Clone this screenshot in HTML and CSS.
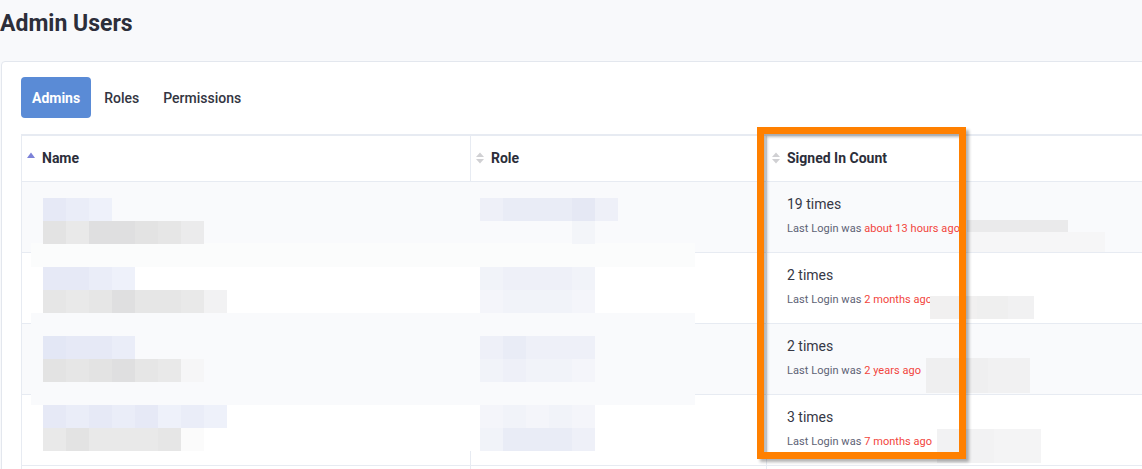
FILE: index.html
```html
<!DOCTYPE html>
<html lang="en">
<head>
<meta charset="utf-8">
<title>Admin Users</title>
<link rel="stylesheet" href="styles.css">
</head>
<body>
<h1 class="page-title">Admin Users</h1>
<section class="card">
  <nav class="tabs">
    <span class="tab active">Admins</span>
    <span class="tab">Roles</span>
    <span class="tab">Permissions</span>
  </nav>
  <div class="table">
    <div class="thead">
      <div class="th">
        <svg class="sort" width="8" height="12" viewBox="0 0 8 12"><path d="M0 6 L4 0.5 L8 6 Z" fill="#7c82d8"/></svg>
        <span>Name</span>
      </div>
      <div class="th col-sep">
        <svg class="sort" width="8" height="12" viewBox="0 0 8 12"><path d="M0 5 L4 0.5 L8 5 Z" fill="#d0d0d3"/><path d="M0 7 L8 7 L4 11.5 Z" fill="#d0d0d3"/></svg>
        <span>Role</span>
      </div>
      <div class="th col-sep">
        <svg class="sort" width="8" height="12" viewBox="0 0 8 12"><path d="M0 5 L4 0.5 L8 5 Z" fill="#d0d0d3"/><path d="M0 7 L8 7 L4 11.5 Z" fill="#d0d0d3"/></svg>
        <span>Signed In Count</span>
      </div>
    </div>
    <div class="tbody">
      <div class="row striped">
        <div class="td"></div>
        <div class="td col-sep"></div>
        <div class="td col-sep count">
          <div class="times">19 times</div>
          <div class="login">Last Login was <span class="ago">about 13 hours ago</span></div>
        </div>
      </div>
      <div class="row">
        <div class="td"></div>
        <div class="td col-sep"></div>
        <div class="td col-sep count">
          <div class="times">2 times</div>
          <div class="login">Last Login was <span class="ago">2 months ago</span></div>
        </div>
      </div>
      <div class="row striped">
        <div class="td"></div>
        <div class="td col-sep"></div>
        <div class="td col-sep count">
          <div class="times">2 times</div>
          <div class="login">Last Login was <span class="ago">2 years ago</span></div>
        </div>
      </div>
      <div class="row">
        <div class="td"></div>
        <div class="td col-sep"></div>
        <div class="td col-sep count">
          <div class="times">3 times</div>
          <div class="login">Last Login was <span class="ago">7 months ago</span></div>
        </div>
      </div>
      <div class="row">
        <div class="td"></div>
        <div class="td col-sep"></div>
        <div class="td col-sep count"></div>
      </div>

      <div class="redact-layer" aria-hidden="true">
        <div class="band band-a"></div>
        <div class="band band-b"></div>
        <div class="band band-c"></div>
        <div class="band band-d"></div>
        <div class="band band-e"></div>

        <div class="pix col-name p1">
          <div class="pr"><i class="b1"></i><i class="b2"></i><i class="b3"></i></div>
          <div class="pr"><i class="g1"></i><i class="g3"></i><i class="g0"></i><i class="g0"></i><i class="g1"></i><i class="g2"></i><i class="g4"></i></div>
        </div>
        <div class="pix col-name p2">
          <div class="pr"><i class="b1"></i><i class="b1"></i><i class="b2"></i><i class="b3"></i></div>
          <div class="pr"><i class="g2"></i><i class="g3"></i><i class="g2"></i><i class="g0"></i><i class="g2"></i><i class="g2"></i><i class="g3"></i><i class="g5"></i></div>
        </div>
        <div class="pix col-name p3">
          <div class="pr"><i class="b0"></i><i class="b1"></i><i class="b1"></i><i class="b2"></i></div>
          <div class="pr"><i class="g1"></i><i class="g2"></i><i class="g1"></i><i class="g0"></i><i class="g2"></i><i class="g3"></i><i class="g6"></i></div>
        </div>
        <div class="pix col-name p4">
          <div class="pr"><i class="b1"></i><i class="b2"></i><i class="b1"></i><i class="b2"></i><i class="b1"></i><i class="b3"></i><i class="b2"></i><i class="b3"></i></div>
          <div class="pr"><i class="g3"></i><i class="g1"></i><i class="g3"></i><i class="g3"></i><i class="g3"></i><i class="g2"></i><i class="g7"></i></div>
        </div>

        <div class="pix col-role p1">
          <div class="pr"><i class="l2"></i><i class="l1"></i><i class="l1"></i><i class="l1"></i><i class="l0"></i><i class="l2"></i></div>
          <div class="pr"><i class="l9"></i><i class="l9"></i><i class="l9"></i><i class="l9"></i><i class="l5"></i></div>
        </div>
        <div class="pix col-role p2">
          <div class="pr"><i class="l3"></i><i class="l2"></i><i class="l2"></i><i class="l2"></i><i class="l3"></i></div>
          <div class="pr"><i class="l4"></i><i class="l3"></i><i class="l3"></i><i class="l3"></i><i class="l4"></i></div>
        </div>
        <div class="pix col-role p3">
          <div class="pr"><i class="l2"></i><i class="l1"></i><i class="l2"></i><i class="l2"></i><i class="l2"></i></div>
          <div class="pr"><i class="l3"></i><i class="l2"></i><i class="l3"></i><i class="l3"></i><i class="l4"></i></div>
        </div>
        <div class="pix col-role p4">
          <div class="pr"><i class="l4"></i><i class="l3"></i><i class="l4"></i><i class="l3"></i><i class="l4"></i></div>
          <div class="pr"><i class="l3"></i><i class="l1"></i><i class="l1"></i><i class="l1"></i><i class="l2"></i></div>
        </div>

        <div class="date d1">
          <div class="dtop"></div>
          <div class="dbot"></div>
        </div>
        <div class="date d2"></div>
        <div class="date d3"></div>
        <div class="date d4"></div>
      </div>
    </div>
  </div>
</section>
<div class="highlight" aria-hidden="true"></div>
</body>
</html>
```

FILE: styles.css
```css
html, body {
  margin: 0;
  padding: 0;
  overflow: hidden;
}

body {
  background: #f8f9fb;
  font-family: Roboto, "Liberation Sans", Arial, sans-serif;
  color: #2f313d;
  position: relative;
  width: 1142px;
  height: 469px;
}

.page-title {
  margin: 0;
  padding: 10px 0 0 0;
  height: 51px;
  box-sizing: border-box;
  font-size: 23px;
  line-height: 27px;
  font-weight: 700;
  color: #2c2e3a;
}

.card {
  margin-left: 1px;
  width: 1300px;
  background: #ffffff;
  border: 1px solid #e3e7ee;
  border-radius: 4px;
  padding: 15px 19px 0 19px;
  margin-top: 10px;
}

.tabs {
  display: flex;
  gap: 2px;
}

.tab {
  display: flex;
  align-items: center;
  height: 41px;
  padding: 0 11px;
  font-size: 14px;
  line-height: 16px;
  font-weight: 500;
  color: #333542;
  border-radius: 4px;
}

.tab.active {
  background: #5a8bd6;
  color: #ffffff;
  font-weight: 700;
}

.table {
  margin-top: 16px;
  border-top: 2px solid #e7ebf2;
  border-left: 1px solid #e7ebf2;
}

.thead,
.row {
  display: grid;
  grid-template-columns: 448px 296px 1fr;
}

.thead {
  height: 46px;
  border-bottom: 1px solid #e7ebf2;
  box-sizing: border-box;
  background: #ffffff;
}

.th {
  display: flex;
  align-items: center;
  gap: 7px;
  padding-left: 5px;
  padding-bottom: 1px;
  font-size: 14px;
  line-height: 16px;
  font-weight: 700;
  color: #2c2e3a;
}

.sort {
  display: block;
  flex: none;
}

.col-sep {
  border-left: 1px solid #e7ebf2;
}

.tbody {
  position: relative;
}

.row {
  height: 71px;
  box-sizing: border-box;
  border-bottom: 1px solid #e7ebf2;
  background: #ffffff;
}

.row.striped {
  background: #f9fafc;
}

.count {
  padding: 14px 0 0 20px;
  display: flex;
  flex-direction: column;
}

.times {
  font-size: 14px;
  line-height: 16px;
  color: #363846;
}

.login {
  margin-top: 10px;
  font-size: 11px;
  line-height: 14px;
  color: #5d6275;
  white-space: nowrap;
  letter-spacing: 0.05px;
}

.ago {
  color: #f2453d;
}

/* redaction (pixelated blur) overlay */
.redact-layer {
  position: absolute;
  left: 0;
  top: 0;
  width: 100%;
  height: 100%;
  pointer-events: none;
}

.band {
  position: absolute;
  left: 9px;
  width: 664px;
}
.band-a { top: 0; height: 61px; background: #f9fafc; }
.band-b { top: 61px; height: 24px; background: #fbfcfc; }
.band-c { top: 85px; height: 46px; background: #ffffff; }
.band-d { top: 131px; height: 92px; background: #f9fafc; }
.band-e { top: 223px; height: 46px; background: #ffffff; }

.pix {
  position: absolute;
  display: flex;
  flex-direction: column;
}
.pix.col-name { left: 21px; }
.pix.col-role { left: 458px; }
.pix.p1 { top: 16px; }
.pix.p2 { top: 85px; }
.pix.p3 { top: 154px; }
.pix.p4 { top: 223px; }

.pr {
  display: flex;
}
.pr i {
  display: block;
  width: 23px;
  height: 23px;
}

.b0 { background: #e3e7f5; }
.b1 { background: #e6e9f6; }
.b2 { background: #eaedf8; }
.b3 { background: #eef1fa; }

.g0 { background: #dfdfe0; }
.g1 { background: #e3e3e3; }
.g2 { background: #e6e6e6; }
.g3 { background: #e9e9e9; }
.g4 { background: #ebebec; }
.g5 { background: #f2f2f3; }
.g6 { background: #f6f6f7; }
.g7 { background: #fbfbfb; }

.l0 { background: #e5e8f4; }
.l1 { background: #e9ecf6; }
.l2 { background: #eef0f8; }
.l3 { background: #f1f3f9; }
.l4 { background: #f4f5fa; }
.l5 { background: #f3f5f9; }
.l9 { background: transparent; }

.date {
  position: absolute;
}
.d1 { left: 945px; top: 38px; }
.d1 .dtop { width: 101px; height: 12px; background: #eaeaeb; }
.d1 .dbot { width: 138px; height: 20px; background: #f6f6f7; }
.d2 { left: 908px; top: 114px; width: 104px; height: 23px; background: linear-gradient(to right, #f1f0f0 0 45%, #efefef 45% 75%, #f1f1f2 75%); }
.d3 { left: 904px; top: 176px; width: 104px; height: 35px; background: linear-gradient(to right, #efeff0 0 60%, #f1f1f2 60%); }
.d4 { left: 915px; top: 247px; width: 104px; height: 34px; background: linear-gradient(to right, #f2f2f3 0 55%, #f4f4f5 55%); }

/* orange callout frame over the Signed In Count column */
.highlight {
  position: absolute;
  left: 757px;
  top: 127px;
  width: 209px;
  height: 332px;
  box-sizing: border-box;
  border: 7px solid #ff8000;
  box-shadow: 3px 3px 3px rgba(0, 0, 0, 0.3), inset 3px 3px 3px rgba(0, 0, 0, 0.28);
  pointer-events: none;
}
```
